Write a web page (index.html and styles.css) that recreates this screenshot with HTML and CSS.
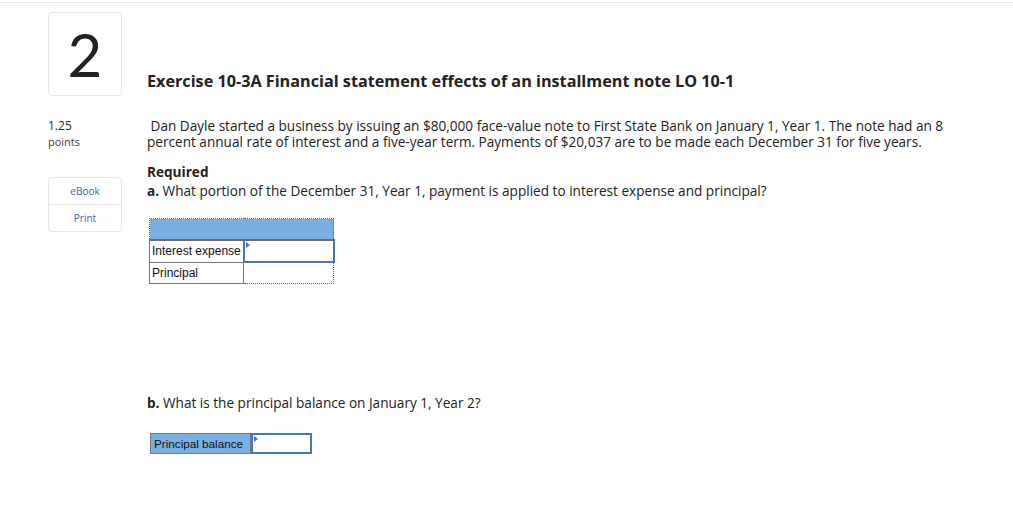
FILE: index.html
```html
<!DOCTYPE html>
<html>
<head>
<meta charset="utf-8">
<link rel="stylesheet" href="styles.css">
</head>
<body>
<div class="topline"></div>
<div class="page">
  <aside class="side">
    <div class="qnum">2</div>
    <div class="points">
      <div class="pval">1.25</div>
      <div class="plabel">points</div>
    </div>
    <div class="tools">
      <div class="tool">eBook</div>
      <div class="tool">Print</div>
    </div>
  </aside>
  <main class="main">
    <h1 class="title">Exercise 10-3A Financial statement effects of an installment note LO 10-1</h1>
    <p class="intro">&nbsp;Dan Dayle started a business by issuing an $80,000 face-value note to First State Bank on January 1, Year 1. The note had an 8 percent annual rate of interest and a five-year term. Payments of $20,037 are to be made each December 31 for five years.</p>
    <p class="qa"><b>Required</b><br><b>a.</b> What portion of the December 31, Year 1, payment is applied to interest expense and principal?</p>
    <table class="grid">
      <tr class="hdr"><td colspan="2"></td></tr>
      <tr><td class="lbl">Interest expense</td><td class="inp active"><span class="flag"></span></td></tr>
      <tr><td class="lbl">Principal</td><td class="inp"></td></tr>
    </table>
    <div class="q qb"><b>b.</b> What is the principal balance on January 1, Year 2?</div>
    <div class="bal">
      <div class="ballbl">Principal balance</div>
      <div class="balinp"><span class="flag"></span></div>
    </div>
  </main>
</div>
</body>
</html>
```
FILE: styles.css
```css
html, body { margin: 0; padding: 0; background: #fff; }
body { font-family: "Open Sans", Lato, sans-serif; color: #222; }
.topline { margin-top: 2px; height: 1px; background: #e6e6e6; }
.page { display: flex; padding-left: 48px; gap: 25px; }
.side { width: 74px; flex: none; padding-top: 9px; }
.qnum {
  box-sizing: border-box; width: 74px; height: 84px;
  border: 1px solid #e8e8e8; border-radius: 4px;
  display: flex; align-items: center; justify-content: center;
  font-family: Lato, sans-serif;
  font-size: 60px; font-weight: 400; color: #222; line-height: 1;
}
.points { margin-top: 22px; font-size: 12px; line-height: 16px; }
.pval { color: #1b2a48; }
.plabel { color: #444; font-size: 11px; }
.tools {
  margin-top: 27px; border: 1px solid #e6e6e6; border-radius: 4px;
}
.tool {
  height: 26px; display: flex; align-items: center; justify-content: center;
  font-size: 10px; color: #4166a8;
}
.tool + .tool { border-top: 1px solid #e6e6e6; }
.main { flex: 1; }
.title { margin: 68px 0 0; font-size: 16.2px; font-weight: 700; line-height: 20px; color: #222; }
.intro { margin: 27px 0 0; font-size: 13.6px; line-height: 16px; width: 810px; color: #222; }
.qa { margin: 13px 0 0; font-size: 13.6px; line-height: 18.5px; }
.qa b, .q b { font-weight: 700; }
.q { font-size: 13.6px; line-height: 16px; }
.grid {
  margin-top: 18px; margin-left: 2px; border-collapse: collapse;
  border: 1px dotted #3a6fb3; font-family: "Liberation Sans", Arial, sans-serif; font-size: 12px;
}
.grid td { padding: 0 2px; height: 20px; }
.hdr td { background: #7aafe2; height: 20px; border-bottom: 2px solid #6b6b6b; }
.lbl { width: 88px; border: 1px solid #777; border-left: 1px solid #777; color: #111; white-space: nowrap; }
.inp { width: 84px; border: 1px dotted #3a6fb3; position: relative; }
.inp.active { border: 2px solid #4577b5; }
.flag {
  position: absolute; left: 1px; top: 1px; width: 0; height: 0;
  border-top: 3px solid transparent; border-bottom: 3px solid transparent;
  border-left: 4px solid #3f78c6;
}
.qb { margin-top: 111px; }
.bal { display: flex; margin-top: 22px; margin-left: 3px; font-family: "Liberation Sans", Arial, sans-serif; font-size: 11.7px; }
.ballbl {
  box-sizing: border-box; height: 21px; width: 101px; padding-left: 3px;
  background: #7aafe2; border: 1px solid #7a7a7a; display: flex; align-items: center; color: #111; white-space: nowrap;
}
.balinp {
  box-sizing: border-box; width: 61px; height: 21px;
  border: 2px solid #4577b5; position: relative;
}
```
